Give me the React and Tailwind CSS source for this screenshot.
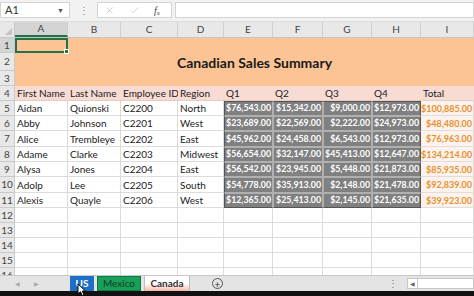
import React from 'react';
import { X, Check } from 'lucide-react';

const font = { fontFamily: 'Lato, "Liberation Sans", sans-serif' };

const colW = ['w-[15px]', 'w-[53px]', 'w-[53px]', 'w-[57px]', 'w-[46px]', 'w-[49px]', 'w-[50px]', 'w-[49px]', 'w-[49px]', 'flex-1'];
const letters = ['A', 'B', 'C', 'D', 'E', 'F', 'G', 'H', 'I'];

const rows = [
  ['Aidan', 'Quionski', 'C2200', 'North', '$76,543.00', '$15,342.00', '$9,000.00', '$12,973.00', '$100,885.00'],
  ['Abby', 'Johnson', 'C2201', 'West', '$23,689.00', '$22,569.00', '$2,222.00', '$24,973.00', '$48,480.00'],
  ['Alice', 'Trembleye', 'C2202', 'East', '$45,962.00', '$24,458.00', '$6,543.00', '$12,973.00', '$76,963.00'],
  ['Adame', 'Clarke', 'C2203', 'Midwest', '$56,654.00', '$32,147.00', '$45,413.00', '$12,647.00', '$134,214.00'],
  ['Alysa', 'Jones', 'C2204', 'East', '$56,542.00', '$23,945.00', '$5,448.00', '$21,873.00', '$85,935.00'],
  ['Adolp', 'Lee', 'C2205', 'South', '$54,778.00', '$35,913.00', '$2,148.00', '$21,478.00', '$92,839.00'],
  ['Alexis', 'Quayle', 'C2206', 'West', '$12,365.00', '$25,413.00', '$2,145.00', '$21,635.00', '$39,923.00'],
];
// row heights for rows 5..11
const dataH = ['h-[15px]', 'h-[15px]', 'h-[16px]', 'h-[15px]', 'h-[15px]', 'h-[16px]', 'h-[15px]'];

const RowHead = ({ n, active }) => (
  <div className={`w-[15px] shrink-0 h-full flex items-center justify-center text-[10px] text-[#444] border-r border-b border-[#c9c9c9] ${active ? 'bg-[#d4d4d4]' : 'bg-[#e8e8e8]'}`}>
    {n}
  </div>
);

const FormulaBar = () => (
  <div className="h-[22px] shrink-0 bg-[#f2f2f2] flex items-start pt-[2px] border-b border-[#dcdcdc]">
    <div className="w-[70px] h-[16px] bg-white border border-[#d4d4d4] flex items-center justify-between pl-[4px] pr-[5px]">
      <span className="text-[11px] text-[#333]">A1</span>
      <span className="text-[7px] text-[#555]">▼</span>
    </div>
    <span className="ml-[9px] text-[10px] text-[#888] leading-[16px]">⋮</span>
    <div className="ml-[8px] w-[75px] h-[16px] bg-white border border-[#d4d4d4] flex items-center">
      <X size={11} strokeWidth={1.3} className="ml-[6px] text-[#b4b4b4]" />
      <Check size={11} strokeWidth={1.3} className="ml-[14px] text-[#b4b4b4]" />
      <span className="ml-[14px] text-[10px] italic text-[#444]" style={{ fontFamily: '"Liberation Serif", serif' }}>
        f<sub className="text-[7px]">x</sub>
      </span>
    </div>
    <div className="ml-[3px] flex-1 h-[16px] bg-white border border-[#d4d4d4]" />
  </div>
);

const ColHeader = () => (
  <div className="flex h-[16px] shrink-0 bg-[#e8e8e8] border-b border-[#c6c6c6]">
    <div className="w-[15px] shrink-0 border-r border-[#c6c6c6] flex items-end justify-end p-[2px]">
      <div className="w-0 h-0 border-l-[7px] border-l-transparent border-b-[7px] border-b-[#c4c4c4]" />
    </div>
    {letters.map((l, i) => (
      <div
        key={l}
        className={`${colW[i + 1]} shrink-0 flex items-center justify-center text-[10px] text-[#444] border-r border-[#cfcfcf] ${i === 0 ? 'bg-[#d4d4d4] border-b-2 border-b-[#217346]' : ''}`}
      >
        {l}
      </div>
    ))}
  </div>
);

const TitleBlock = () => (
  <div className="flex shrink-0">
    <div className="w-[15px] shrink-0 flex flex-col">
      <div className="h-[15px]"><RowHead n="1" active /></div>
      <div className="h-[18px]"><RowHead n="2" /></div>
      <div className="h-[15px]"><RowHead n="3" /></div>
    </div>
    <div className="flex-1 bg-[#fcc495] flex flex-col">
      <div className="h-[15px] flex">
        <div className="w-[53px] h-[15px] border-2 border-[#217346] relative">
          <div className="absolute -right-[3px] -bottom-[3px] w-[5px] h-[5px] bg-[#217346] border border-white" />
        </div>
      </div>
      <div className="h-[18px] flex items-center justify-center pl-[20px] text-[14px] font-bold text-[#1a1a1a]">
        Canadian Sales Summary
      </div>
      <div className="h-[15px]" />
    </div>
  </div>
);

const HeaderRow = () => {
  const labels = ['First Name', 'Last Name', 'Employee ID', 'Region', 'Q1', 'Q2', 'Q3', 'Q4', 'Total'];
  return (
    <div className="flex h-[15px] shrink-0">
      <RowHead n="4" />
      {labels.map((t, i) => (
        <div key={t} className={`${colW[i + 1]} shrink-0 bg-[#f8dcd4] border-b border-[#e6cbc3] flex items-center px-[2px] text-[10px] text-[#222] leading-none whitespace-nowrap`}>
          {t}
        </div>
      ))}
    </div>
  );
};

const DataRow = ({ r, idx }) => {
  const first = idx === 0;
  const last = idx === rows.length - 1;
  return (
    <div className={`flex shrink-0 ${dataH[idx]}`}>
      <RowHead n={idx + 5} />
      {r.map((v, i) => {
        if (i < 4) {
          return (
            <div key={i} className={`${colW[i + 1]} shrink-0 border-r border-b border-[#dcdcdc] flex items-center px-[2px] text-[10px] text-[#222] leading-none whitespace-nowrap`}>
              {v}
            </div>
          );
        }
        if (i < 8) {
          return (
            <div
              key={i}
              className={`${colW[i + 1]} shrink-0 bg-[#808080] border border-[#b0b0b0] flex items-center justify-end pr-[1px] text-[8.8px] font-bold text-white leading-none whitespace-nowrap ${first ? 'border-t-[#555]' : ''} ${last ? 'border-b-[#555]' : ''} ${i === 4 ? 'border-l-[#555]' : ''} ${i === 7 ? 'border-r-[#555]' : ''}`}
            >
              {v}
            </div>
          );
        }
        return (
          <div key={i} className="flex-1 bg-[#fdf3ee] border-r border-b border-[#e3dcd9] flex items-center justify-end pr-[1px] text-[9px] font-bold text-[#e8902c] leading-none whitespace-nowrap">
            {v}
          </div>
        );
      })}
    </div>
  );
};

const EmptyRow = ({ n, h }) => (
  <div className={`flex shrink-0 ${h}`}>
    <RowHead n={n} />
    {letters.map((l, i) => (
      <div key={l} className={`${colW[i + 1]} shrink-0 border-r border-b border-[#dcdcdc]`} />
    ))}
  </div>
);

const Cursor = () => (
  <svg className="absolute left-[77px] top-[283px]" width="10" height="14" viewBox="0 0 10 14">
    <path d="M1 1 L1 11 L3.5 8.7 L5.3 12.8 L7 12 L5.3 8 L8.6 8 Z" fill="white" stroke="black" strokeWidth="1" strokeLinejoin="round" />
  </svg>
);

const TabBar = () => (
  <div className="h-[16px] shrink-0 bg-[#e4e4e4] border-t border-[#c8c8c8] flex items-start relative">
    <span className="ml-[15px] mt-[3px] text-[6px] text-[#aaa]">◀</span>
    <span className="ml-[14px] mt-[3px] text-[6px] text-[#aaa]">▶</span>
    <div className="ml-[31px] w-[24px] h-[15px] bg-[#1d6fc8] flex items-center justify-center text-[10px] font-bold text-white">US</div>
    <div className="ml-[3px] w-[44px] h-[15px] bg-[#16a05a] border border-[#0e7a40] flex items-center justify-center text-[10px] text-[#173a22]">Mexico</div>
    <div className="ml-[3px] w-[46px] h-[15px] bg-gradient-to-b from-white via-white to-[#f5b8a8] border-x border-[#bdbdbd] flex items-center justify-center text-[10px] font-bold text-[#333]">Canada</div>
    <div className="ml-[22px] mt-[2px] w-[11px] h-[11px] rounded-full border border-[#555] flex items-center justify-center text-[10px] leading-none text-[#333]">+</div>
    <div className="flex-1" />
    <span className="mt-[1px] text-[10px] text-[#777] leading-[13px]">⋮</span>
    <div className="ml-[9px] mt-[2px] w-[67px] h-[11px] bg-white border border-[#c8c8c8] flex items-center">
      <span className="ml-[2px] text-[6px] text-[#666]">◀</span>
      <div className="ml-[2px] h-full border-l border-[#c8c8c8]" />
    </div>
  </div>
);

export default function App() {
  return (
    <div className="w-[474px] h-[296px] overflow-hidden bg-white relative flex flex-col" style={font}>
      <FormulaBar />
      <div className="flex-1 overflow-hidden flex flex-col">
        <ColHeader />
        <TitleBlock />
        <HeaderRow />
        {rows.map((r, i) => (
          <DataRow key={i} r={r} idx={i} />
        ))}
        <EmptyRow n={12} h="h-[15px]" />
        <EmptyRow n={13} h="h-[15px]" />
        <EmptyRow n={14} h="h-[15px]" />
        <EmptyRow n={15} h="h-[15px]" />
        <EmptyRow n={16} h="h-[15px]" />
      </div>
      <TabBar />
      <div className="h-[5px] bg-[#111] shrink-0" />
      <Cursor />
    </div>
  );
}
